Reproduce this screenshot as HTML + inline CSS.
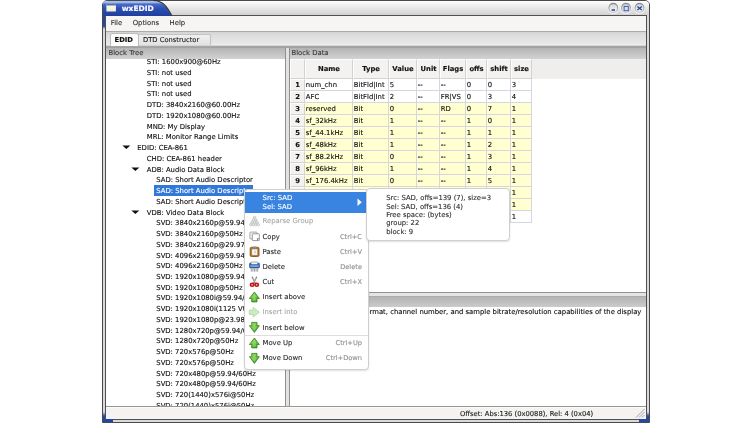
<!DOCTYPE html>
<html><head><meta charset="utf-8"><title>wxEDID</title>
<style>
html,body{margin:0;padding:0;background:#fff;}
body{width:752px;height:423px;position:relative;overflow:hidden;font-family:"DejaVu Sans","Liberation Sans",sans-serif;font-size:6.85px;color:#1a1a1a;-webkit-text-stroke:0.13px;}
.a{position:absolute;}
.t{position:absolute;white-space:pre;line-height:10px;height:10px;}
.b{font-weight:bold;}
#tree .t{color:#111;}
.mi{position:absolute;left:262.5px;white-space:pre;line-height:10px;height:10px;color:#2e2e2e;}
.sc{position:absolute;right:0;width:60px;text-align:right;white-space:pre;line-height:10px;height:10px;color:#929292;font-size:6.65px;}
.dis{color:#aaa;}
.cell{position:absolute;white-space:pre;line-height:12px;height:12px;color:#111;}
</style></head><body><div id="root" style="position:absolute;left:0;top:0;width:752px;height:423px;will-change:transform;">

<div class="a" id="frame" style="left:102px;top:0;width:546px;height:421px;border:1px solid #4a4a4a;border-radius:5px 5px 0 0;background:#d9d9d9;"></div>
<div class="a" style="left:103px;top:1px;width:546px;height:14px;border-radius:4px 4px 0 0;background:linear-gradient(#ffffff,#f0f0f0 30%,#d2d2d2);"></div>
<div class="a" style="left:105px;top:15px;width:540px;height:403px;border:1px solid #505050;background:#f5f4f2;"></div>
<svg class="a" style="left:102px;top:0" width="80" height="16" viewBox="0 0 80 16">
<defs><linearGradient id="bl" x1="0" y1="0" x2="0" y2="1"><stop offset="0" stop-color="#a9c0f2"/><stop offset="0.1" stop-color="#9db6ee"/><stop offset="0.2" stop-color="#4a6cca"/><stop offset="0.5" stop-color="#2c4fb4"/><stop offset="1" stop-color="#1f3f9e"/></linearGradient></defs>
<path d="M1,16 L1,5 Q1,1 5,1 L52.7,1 C60.7,1 65.2,8 69.2,15.5 L69.2,16 Z" fill="url(#bl)"/>
<path d="M51.7,0.5 C61.2,0.5 65.7,8 69.7,15.5" fill="none" stroke="#2a2a2a" stroke-width="1.1"/>
<defs><linearGradient id="ic" x1="0" y1="0" x2="0" y2="1"><stop offset="0" stop-color="#fcfcf4"/><stop offset="1" stop-color="#efefd6"/></linearGradient></defs><rect x="4.4" y="3.8" width="9.5" height="7.7" fill="url(#ic)"/>
<rect x="4.4" y="3.8" width="9.5" height="1.7" fill="#56729f"/>
</svg>
<div class="t b" style="left:121.7px;top:3.5px;font-size:7.5px;color:#fff;">wxEDID</div>
<div class="a" style="left:103px;top:15px;width:2px;height:14px;background:linear-gradient(#2345a6,#2345a6 80%,#d9d9d9);"></div>
<svg class="a" style="left:607px;top:2px;overflow:visible" width="13" height="12" viewBox="0 0 13 12"><g transform="translate(0.30,0)"><defs><linearGradient id="gmin" x1="0" y1="0" x2="0" y2="1"><stop offset="0" stop-color="#d6d6d6"/><stop offset="1" stop-color="#f8f8f8"/></linearGradient><linearGradient id="rmin" x1="0" y1="0" x2="0" y2="1"><stop offset="0" stop-color="#8e8e8e"/><stop offset="1" stop-color="#c8c8c8"/></linearGradient></defs><circle cx="6" cy="6.2" r="5.6" fill="#ffffff" opacity="0.8"/><circle cx="6" cy="5.9" r="4.4" fill="url(#gmin)" stroke="url(#rmin)" stroke-width="1.3"/>
<rect x="4.3" y="7.2" width="3.4" height="1.6" fill="#2b4cae"/>
</g></svg>
<svg class="a" style="left:620px;top:2px;overflow:visible" width="13" height="12" viewBox="0 0 13 12"><g transform="translate(0.00,0)"><defs><linearGradient id="gmax" x1="0" y1="0" x2="0" y2="1"><stop offset="0" stop-color="#d6d6d6"/><stop offset="1" stop-color="#f8f8f8"/></linearGradient><linearGradient id="rmax" x1="0" y1="0" x2="0" y2="1"><stop offset="0" stop-color="#8e8e8e"/><stop offset="1" stop-color="#c8c8c8"/></linearGradient></defs><circle cx="6" cy="6.2" r="5.6" fill="#ffffff" opacity="0.8"/><circle cx="6" cy="5.9" r="4.4" fill="url(#gmax)" stroke="url(#rmax)" stroke-width="1.3"/>
<rect x="4.1" y="4.4" width="4.2" height="4.3" fill="#dcdfe8" stroke="#3656b4" stroke-width="0.95"/>
</g></svg>
<svg class="a" style="left:633px;top:2px;overflow:visible" width="13" height="12" viewBox="0 0 13 12"><g transform="translate(0.50,0)"><defs><linearGradient id="gclose" x1="0" y1="0" x2="0" y2="1"><stop offset="0" stop-color="#d6d6d6"/><stop offset="1" stop-color="#f8f8f8"/></linearGradient><linearGradient id="rclose" x1="0" y1="0" x2="0" y2="1"><stop offset="0" stop-color="#8e8e8e"/><stop offset="1" stop-color="#c8c8c8"/></linearGradient></defs><circle cx="6" cy="6.2" r="5.6" fill="#ffffff" opacity="0.8"/><circle cx="6" cy="5.9" r="4.4" fill="url(#gclose)" stroke="url(#rclose)" stroke-width="1.3"/>
<path d="M3.9,4.5 L8.3,8 M8.3,4.5 L3.9,8" stroke="#2446ac" stroke-width="1.35" fill="none"/>
</g></svg>
<div class="a" style="left:106px;top:16px;width:540px;height:15px;background:#f6f5f3;"></div>
<div class="t" style="left:110.7px;top:18px;color:#333;">File</div>
<div class="t" style="left:132.7px;top:18px;color:#333;">Options</div>
<div class="t" style="left:169.6px;top:18px;color:#333;">Help</div>
<div class="a" style="left:106px;top:31px;width:540px;height:13px;background:linear-gradient(#ababab,#ababab 7.7%,#d3d3d3 8%,#dedede 35%,#e8e8e8 100%);"></div>
<div class="a" style="left:106px;top:44px;width:540px;height:1px;background:#efefef;"></div>
<div class="a" style="left:106px;top:45px;width:540px;height:1px;background:#d4d4d4;"></div>
<div class="a" style="left:106px;top:46px;width:540px;height:1px;background:#a6a6a6;"></div>
<div class="a" style="left:106px;top:47px;width:540px;height:1px;background:#a2a2a2;"></div>
<div class="a" style="left:138px;top:34px;width:72.6px;height:11px;border:1px solid #c2c2c2;border-bottom:none;border-radius:2px 2px 0 0;box-sizing:border-box;background:linear-gradient(#efefef,#e2e2e2);"></div>
<div class="a" style="left:110.4px;top:33px;width:29px;height:12.6px;border:1px solid #bdbdbd;border-bottom:none;border-radius:2.5px 2.5px 0 0;box-sizing:border-box;background:#fcfcfb;"></div>
<div class="t b" style="left:114.5px;top:34.5px;color:#111;font-size:6.8px">EDID</div>
<div class="t" style="left:143px;top:34.5px;color:#222;font-size:6.75px;">DTD Constructor</div>
<div class="a" style="left:106px;top:48px;width:179px;height:11px;background:linear-gradient(#b4b4b4,#c3c3c3 50%,#d2d2d2);"></div>
<div class="a" style="left:290px;top:48px;width:356px;height:11px;background:linear-gradient(#b4b4b4,#c3c3c3 50%,#d2d2d2);"></div>
<div class="t" style="left:108.5px;top:48px;color:#3a3a3a;">Block Tree</div>
<div class="t" style="left:291.5px;top:48px;color:#3a3a3a;">Block Data</div>
<div class="a" style="left:285px;top:48px;width:5px;height:359px;background:#e3e2e0;border-left:1px solid #8f8f8f;border-right:1px solid #8f8f8f;box-sizing:border-box;"></div>
<div class="a" id="tree" style="left:106px;top:59px;width:179px;height:347px;background:#fff;overflow:hidden;">
<div class="t" style="left:40.8px;top:-1.90px;">STI: 1600x900@60Hz</div>
<div class="t" style="left:40.8px;top:8.84px;">STI: not used</div>
<div class="t" style="left:40.8px;top:19.59px;">STI: not used</div>
<div class="t" style="left:40.8px;top:30.34px;">STI: not used</div>
<div class="t" style="left:40.8px;top:41.08px;">DTD: 3840x2160@60.00Hz</div>
<div class="t" style="left:40.8px;top:51.82px;">DTD: 1920x1080@60.00Hz</div>
<div class="t" style="left:40.8px;top:62.57px;">MND: My Display</div>
<div class="t" style="left:40.8px;top:73.31px;">MRL: Monitor Range Limits</div>
<div class="t" style="left:31.3px;top:84.06px;">EDID: CEA-861</div>
<svg class="a" style="left:15.5px;top:86.36px" width="9" height="5" viewBox="0 0 9 5"><path d="M0.4,0.5 L8.3,0.5 L4.35,4.1 Z" fill="#111"/></svg>
<div class="t" style="left:40.8px;top:94.81px;">CHD: CEA-861 header</div>
<div class="t" style="left:40.8px;top:105.55px;">ADB: Audio Data Block</div>
<svg class="a" style="left:25.0px;top:107.85px" width="9" height="5" viewBox="0 0 9 5"><path d="M0.4,0.5 L8.3,0.5 L4.35,4.1 Z" fill="#111"/></svg>
<div class="t" style="left:50.3px;top:116.29px;">SAD: Short Audio Descriptor</div>
<div class="a" style="left:48.3px;top:126.24px;width:99px;height:10.6px;background:#3178d9;"></div>
<div class="t" style="left:50.3px;top:127.04px;color:#fff;">SAD: Short Audio Descriptor</div>
<div class="t" style="left:50.3px;top:137.78px;">SAD: Short Audio Descriptor</div>
<div class="t" style="left:40.8px;top:148.53px;">VDB: Video Data Block</div>
<svg class="a" style="left:25.0px;top:150.83px" width="9" height="5" viewBox="0 0 9 5"><path d="M0.4,0.5 L8.3,0.5 L4.35,4.1 Z" fill="#111"/></svg>
<div class="t" style="left:50.3px;top:159.27px;">SVD: 3840x2160p@59.94/60Hz</div>
<div class="t" style="left:50.3px;top:170.02px;">SVD: 3840x2160p@50Hz</div>
<div class="t" style="left:50.3px;top:180.76px;">SVD: 3840x2160p@29.97/30Hz</div>
<div class="t" style="left:50.3px;top:191.51px;">SVD: 4096x2160p@59.94/60Hz</div>
<div class="t" style="left:50.3px;top:202.25px;">SVD: 4096x2160p@50Hz</div>
<div class="t" style="left:50.3px;top:213.00px;">SVD: 1920x1080p@59.94/60Hz</div>
<div class="t" style="left:50.3px;top:223.75px;">SVD: 1920x1080p@50Hz</div>
<div class="t" style="left:50.3px;top:234.49px;">SVD: 1920x1080i@59.94/60Hz</div>
<div class="t" style="left:50.3px;top:245.24px;">SVD: 1920x1080i(1125 Vt)@50Hz</div>
<div class="t" style="left:50.3px;top:255.98px;">SVD: 1920x1080p@23.98/24Hz</div>
<div class="t" style="left:50.3px;top:266.73px;">SVD: 1280x720p@59.94/60Hz</div>
<div class="t" style="left:50.3px;top:277.47px;">SVD: 1280x720p@50Hz</div>
<div class="t" style="left:50.3px;top:288.21px;">SVD: 720x576p@50Hz</div>
<div class="t" style="left:50.3px;top:298.96px;">SVD: 720x576p@50Hz</div>
<div class="t" style="left:50.3px;top:309.70px;">SVD: 720x480p@59.94/60Hz</div>
<div class="t" style="left:50.3px;top:320.45px;">SVD: 720x480p@59.94/60Hz</div>
<div class="t" style="left:50.3px;top:331.19px;">SVD: 720(1440)x576i@50Hz</div>
<div class="t" style="left:50.3px;top:341.94px;">SVD: 720(1440)x576i@50Hz</div>
</div><div class="a" style="left:290px;top:59px;width:356px;height:233px;background:#fff;"></div>
<div class="a" style="left:290px;top:59px;width:356px;height:20px;background:#efeeec;"></div>
<div class="a" style="left:290px;top:59px;width:15.0px;height:20px;box-sizing:border-box;background:#f3f2f0;border-right:1px solid #d2d2d2;border-bottom:1px solid #d2d2d2;border-left:1px solid #fdfdfd;border-top:1px solid #fdfdfd;"></div>
<div class="a" style="left:305px;top:59px;width:48.0px;height:20px;box-sizing:border-box;background:#f3f2f0;border-right:1px solid #d2d2d2;border-bottom:1px solid #d2d2d2;border-left:1px solid #fdfdfd;border-top:1px solid #fdfdfd;"></div>
<div class="cell b" style="left:305px;top:63px;width:48.0px;text-align:center;font-size:6.8px;">Name</div>
<div class="a" style="left:353px;top:59px;width:36.0px;height:20px;box-sizing:border-box;background:#f3f2f0;border-right:1px solid #d2d2d2;border-bottom:1px solid #d2d2d2;border-left:1px solid #fdfdfd;border-top:1px solid #fdfdfd;"></div>
<div class="cell b" style="left:353px;top:63px;width:36.0px;text-align:center;font-size:6.8px;">Type</div>
<div class="a" style="left:389px;top:59px;width:28.0px;height:20px;box-sizing:border-box;background:#f3f2f0;border-right:1px solid #d2d2d2;border-bottom:1px solid #d2d2d2;border-left:1px solid #fdfdfd;border-top:1px solid #fdfdfd;"></div>
<div class="cell b" style="left:389px;top:63px;width:28.0px;text-align:center;font-size:6.8px;">Value</div>
<div class="a" style="left:417px;top:59px;width:23.0px;height:20px;box-sizing:border-box;background:#f3f2f0;border-right:1px solid #d2d2d2;border-bottom:1px solid #d2d2d2;border-left:1px solid #fdfdfd;border-top:1px solid #fdfdfd;"></div>
<div class="cell b" style="left:417px;top:63px;width:23.0px;text-align:center;font-size:6.8px;">Unit</div>
<div class="a" style="left:440px;top:59px;width:26.0px;height:20px;box-sizing:border-box;background:#f3f2f0;border-right:1px solid #d2d2d2;border-bottom:1px solid #d2d2d2;border-left:1px solid #fdfdfd;border-top:1px solid #fdfdfd;"></div>
<div class="cell b" style="left:440px;top:63px;width:26.0px;text-align:center;font-size:6.8px;">Flags</div>
<div class="a" style="left:466px;top:59px;width:21.0px;height:20px;box-sizing:border-box;background:#f3f2f0;border-right:1px solid #d2d2d2;border-bottom:1px solid #d2d2d2;border-left:1px solid #fdfdfd;border-top:1px solid #fdfdfd;"></div>
<div class="cell b" style="left:466px;top:63px;width:21.0px;text-align:center;font-size:6.8px;">offs</div>
<div class="a" style="left:487px;top:59px;width:24.0px;height:20px;box-sizing:border-box;background:#f3f2f0;border-right:1px solid #d2d2d2;border-bottom:1px solid #d2d2d2;border-left:1px solid #fdfdfd;border-top:1px solid #fdfdfd;"></div>
<div class="cell b" style="left:487px;top:63px;width:24.0px;text-align:center;font-size:6.8px;">shift</div>
<div class="a" style="left:511px;top:59px;width:21.0px;height:20px;box-sizing:border-box;background:#f3f2f0;border-right:1px solid #d2d2d2;border-bottom:1px solid #d2d2d2;border-left:1px solid #fdfdfd;border-top:1px solid #fdfdfd;"></div>
<div class="cell b" style="left:511px;top:63px;width:21.0px;text-align:center;font-size:6.8px;">size</div>
<div class="a" style="left:290px;top:79px;width:15.0px;height:12px;box-sizing:border-box;background:#f3f2f0;border-right:1px solid #d2d2d2;border-bottom:1px solid #d2d2d2;border-left:1px solid #fdfdfd;border-top:1px solid #fdfdfd;"></div>
<div class="cell b" style="left:290px;top:79px;width:15.0px;text-align:center;font-size:6.8px;">1</div>
<div class="a" style="left:305px;top:79px;width:48.0px;height:12px;box-sizing:border-box;background:#ffffff;border-right:1px solid #d6d6e0;border-bottom:1px solid #d6d6e0;"></div>
<div class="cell" style="left:305.8px;top:79px;">num_chn</div>
<div class="a" style="left:353px;top:79px;width:36.0px;height:12px;box-sizing:border-box;background:#ffffff;border-right:1px solid #d6d6e0;border-bottom:1px solid #d6d6e0;"></div>
<div class="cell" style="left:353.8px;top:79px;">BitFld|Int</div>
<div class="a" style="left:389px;top:79px;width:28.0px;height:12px;box-sizing:border-box;background:#ffffff;border-right:1px solid #d6d6e0;border-bottom:1px solid #d6d6e0;"></div>
<div class="cell" style="left:389.8px;top:79px;">5</div>
<div class="a" style="left:417px;top:79px;width:23.0px;height:12px;box-sizing:border-box;background:#ffffff;border-right:1px solid #d6d6e0;border-bottom:1px solid #d6d6e0;"></div>
<div class="cell" style="left:417.8px;top:79px;">--</div>
<div class="a" style="left:440px;top:79px;width:26.0px;height:12px;box-sizing:border-box;background:#ffffff;border-right:1px solid #d6d6e0;border-bottom:1px solid #d6d6e0;"></div>
<div class="cell" style="left:440.8px;top:79px;">--</div>
<div class="a" style="left:466px;top:79px;width:21.0px;height:12px;box-sizing:border-box;background:#ffffff;border-right:1px solid #d6d6e0;border-bottom:1px solid #d6d6e0;"></div>
<div class="cell" style="left:466.8px;top:79px;">0</div>
<div class="a" style="left:487px;top:79px;width:24.0px;height:12px;box-sizing:border-box;background:#ffffff;border-right:1px solid #d6d6e0;border-bottom:1px solid #d6d6e0;"></div>
<div class="cell" style="left:487.8px;top:79px;">0</div>
<div class="a" style="left:511px;top:79px;width:21.0px;height:12px;box-sizing:border-box;background:#ffffff;border-right:1px solid #d6d6e0;border-bottom:1px solid #d6d6e0;"></div>
<div class="cell" style="left:511.8px;top:79px;">3</div>
<div class="a" style="left:290px;top:91px;width:15.0px;height:12px;box-sizing:border-box;background:#f3f2f0;border-right:1px solid #d2d2d2;border-bottom:1px solid #d2d2d2;border-left:1px solid #fdfdfd;border-top:1px solid #fdfdfd;"></div>
<div class="cell b" style="left:290px;top:91px;width:15.0px;text-align:center;font-size:6.8px;">2</div>
<div class="a" style="left:305px;top:91px;width:48.0px;height:12px;box-sizing:border-box;background:#ffffff;border-right:1px solid #d6d6e0;border-bottom:1px solid #d6d6e0;"></div>
<div class="cell" style="left:305.8px;top:91px;">AFC</div>
<div class="a" style="left:353px;top:91px;width:36.0px;height:12px;box-sizing:border-box;background:#ffffff;border-right:1px solid #d6d6e0;border-bottom:1px solid #d6d6e0;"></div>
<div class="cell" style="left:353.8px;top:91px;">BitFld|Int</div>
<div class="a" style="left:389px;top:91px;width:28.0px;height:12px;box-sizing:border-box;background:#ffffff;border-right:1px solid #d6d6e0;border-bottom:1px solid #d6d6e0;"></div>
<div class="cell" style="left:389.8px;top:91px;">2</div>
<div class="a" style="left:417px;top:91px;width:23.0px;height:12px;box-sizing:border-box;background:#ffffff;border-right:1px solid #d6d6e0;border-bottom:1px solid #d6d6e0;"></div>
<div class="cell" style="left:417.8px;top:91px;">--</div>
<div class="a" style="left:440px;top:91px;width:26.0px;height:12px;box-sizing:border-box;background:#ffffff;border-right:1px solid #d6d6e0;border-bottom:1px solid #d6d6e0;"></div>
<div class="cell" style="left:440.8px;top:91px;">FR|VS</div>
<div class="a" style="left:466px;top:91px;width:21.0px;height:12px;box-sizing:border-box;background:#ffffff;border-right:1px solid #d6d6e0;border-bottom:1px solid #d6d6e0;"></div>
<div class="cell" style="left:466.8px;top:91px;">0</div>
<div class="a" style="left:487px;top:91px;width:24.0px;height:12px;box-sizing:border-box;background:#ffffff;border-right:1px solid #d6d6e0;border-bottom:1px solid #d6d6e0;"></div>
<div class="cell" style="left:487.8px;top:91px;">3</div>
<div class="a" style="left:511px;top:91px;width:21.0px;height:12px;box-sizing:border-box;background:#ffffff;border-right:1px solid #d6d6e0;border-bottom:1px solid #d6d6e0;"></div>
<div class="cell" style="left:511.8px;top:91px;">4</div>
<div class="a" style="left:290px;top:103px;width:15.0px;height:12px;box-sizing:border-box;background:#f3f2f0;border-right:1px solid #d2d2d2;border-bottom:1px solid #d2d2d2;border-left:1px solid #fdfdfd;border-top:1px solid #fdfdfd;"></div>
<div class="cell b" style="left:290px;top:103px;width:15.0px;text-align:center;font-size:6.8px;">3</div>
<div class="a" style="left:305px;top:103px;width:48.0px;height:12px;box-sizing:border-box;background:#ffffd0;border-right:1px solid #d6d6e0;border-bottom:1px solid #d6d6e0;"></div>
<div class="cell" style="left:305.8px;top:103px;">reserved</div>
<div class="a" style="left:353px;top:103px;width:36.0px;height:12px;box-sizing:border-box;background:#ffffd0;border-right:1px solid #d6d6e0;border-bottom:1px solid #d6d6e0;"></div>
<div class="cell" style="left:353.8px;top:103px;">Bit</div>
<div class="a" style="left:389px;top:103px;width:28.0px;height:12px;box-sizing:border-box;background:#ffffd0;border-right:1px solid #d6d6e0;border-bottom:1px solid #d6d6e0;"></div>
<div class="cell" style="left:389.8px;top:103px;">0</div>
<div class="a" style="left:417px;top:103px;width:23.0px;height:12px;box-sizing:border-box;background:#ffffd0;border-right:1px solid #d6d6e0;border-bottom:1px solid #d6d6e0;"></div>
<div class="cell" style="left:417.8px;top:103px;">--</div>
<div class="a" style="left:440px;top:103px;width:26.0px;height:12px;box-sizing:border-box;background:#ffffd0;border-right:1px solid #d6d6e0;border-bottom:1px solid #d6d6e0;"></div>
<div class="cell" style="left:440.8px;top:103px;">RD</div>
<div class="a" style="left:466px;top:103px;width:21.0px;height:12px;box-sizing:border-box;background:#ffffd0;border-right:1px solid #d6d6e0;border-bottom:1px solid #d6d6e0;"></div>
<div class="cell" style="left:466.8px;top:103px;">0</div>
<div class="a" style="left:487px;top:103px;width:24.0px;height:12px;box-sizing:border-box;background:#ffffd0;border-right:1px solid #d6d6e0;border-bottom:1px solid #d6d6e0;"></div>
<div class="cell" style="left:487.8px;top:103px;">7</div>
<div class="a" style="left:511px;top:103px;width:21.0px;height:12px;box-sizing:border-box;background:#ffffd0;border-right:1px solid #d6d6e0;border-bottom:1px solid #d6d6e0;"></div>
<div class="cell" style="left:511.8px;top:103px;">1</div>
<div class="a" style="left:290px;top:115px;width:15.0px;height:12px;box-sizing:border-box;background:#f3f2f0;border-right:1px solid #d2d2d2;border-bottom:1px solid #d2d2d2;border-left:1px solid #fdfdfd;border-top:1px solid #fdfdfd;"></div>
<div class="cell b" style="left:290px;top:115px;width:15.0px;text-align:center;font-size:6.8px;">4</div>
<div class="a" style="left:305px;top:115px;width:48.0px;height:12px;box-sizing:border-box;background:#ffffd0;border-right:1px solid #d6d6e0;border-bottom:1px solid #d6d6e0;"></div>
<div class="cell" style="left:305.8px;top:115px;">sf_32kHz</div>
<div class="a" style="left:353px;top:115px;width:36.0px;height:12px;box-sizing:border-box;background:#ffffd0;border-right:1px solid #d6d6e0;border-bottom:1px solid #d6d6e0;"></div>
<div class="cell" style="left:353.8px;top:115px;">Bit</div>
<div class="a" style="left:389px;top:115px;width:28.0px;height:12px;box-sizing:border-box;background:#ffffd0;border-right:1px solid #d6d6e0;border-bottom:1px solid #d6d6e0;"></div>
<div class="cell" style="left:389.8px;top:115px;">1</div>
<div class="a" style="left:417px;top:115px;width:23.0px;height:12px;box-sizing:border-box;background:#ffffd0;border-right:1px solid #d6d6e0;border-bottom:1px solid #d6d6e0;"></div>
<div class="cell" style="left:417.8px;top:115px;">--</div>
<div class="a" style="left:440px;top:115px;width:26.0px;height:12px;box-sizing:border-box;background:#ffffd0;border-right:1px solid #d6d6e0;border-bottom:1px solid #d6d6e0;"></div>
<div class="cell" style="left:440.8px;top:115px;">--</div>
<div class="a" style="left:466px;top:115px;width:21.0px;height:12px;box-sizing:border-box;background:#ffffd0;border-right:1px solid #d6d6e0;border-bottom:1px solid #d6d6e0;"></div>
<div class="cell" style="left:466.8px;top:115px;">1</div>
<div class="a" style="left:487px;top:115px;width:24.0px;height:12px;box-sizing:border-box;background:#ffffd0;border-right:1px solid #d6d6e0;border-bottom:1px solid #d6d6e0;"></div>
<div class="cell" style="left:487.8px;top:115px;">0</div>
<div class="a" style="left:511px;top:115px;width:21.0px;height:12px;box-sizing:border-box;background:#ffffd0;border-right:1px solid #d6d6e0;border-bottom:1px solid #d6d6e0;"></div>
<div class="cell" style="left:511.8px;top:115px;">1</div>
<div class="a" style="left:290px;top:127px;width:15.0px;height:12px;box-sizing:border-box;background:#f3f2f0;border-right:1px solid #d2d2d2;border-bottom:1px solid #d2d2d2;border-left:1px solid #fdfdfd;border-top:1px solid #fdfdfd;"></div>
<div class="cell b" style="left:290px;top:127px;width:15.0px;text-align:center;font-size:6.8px;">5</div>
<div class="a" style="left:305px;top:127px;width:48.0px;height:12px;box-sizing:border-box;background:#ffffd0;border-right:1px solid #d6d6e0;border-bottom:1px solid #d6d6e0;"></div>
<div class="cell" style="left:305.8px;top:127px;">sf_44.1kHz</div>
<div class="a" style="left:353px;top:127px;width:36.0px;height:12px;box-sizing:border-box;background:#ffffd0;border-right:1px solid #d6d6e0;border-bottom:1px solid #d6d6e0;"></div>
<div class="cell" style="left:353.8px;top:127px;">Bit</div>
<div class="a" style="left:389px;top:127px;width:28.0px;height:12px;box-sizing:border-box;background:#ffffd0;border-right:1px solid #d6d6e0;border-bottom:1px solid #d6d6e0;"></div>
<div class="cell" style="left:389.8px;top:127px;">1</div>
<div class="a" style="left:417px;top:127px;width:23.0px;height:12px;box-sizing:border-box;background:#ffffd0;border-right:1px solid #d6d6e0;border-bottom:1px solid #d6d6e0;"></div>
<div class="cell" style="left:417.8px;top:127px;">--</div>
<div class="a" style="left:440px;top:127px;width:26.0px;height:12px;box-sizing:border-box;background:#ffffd0;border-right:1px solid #d6d6e0;border-bottom:1px solid #d6d6e0;"></div>
<div class="cell" style="left:440.8px;top:127px;">--</div>
<div class="a" style="left:466px;top:127px;width:21.0px;height:12px;box-sizing:border-box;background:#ffffd0;border-right:1px solid #d6d6e0;border-bottom:1px solid #d6d6e0;"></div>
<div class="cell" style="left:466.8px;top:127px;">1</div>
<div class="a" style="left:487px;top:127px;width:24.0px;height:12px;box-sizing:border-box;background:#ffffd0;border-right:1px solid #d6d6e0;border-bottom:1px solid #d6d6e0;"></div>
<div class="cell" style="left:487.8px;top:127px;">1</div>
<div class="a" style="left:511px;top:127px;width:21.0px;height:12px;box-sizing:border-box;background:#ffffd0;border-right:1px solid #d6d6e0;border-bottom:1px solid #d6d6e0;"></div>
<div class="cell" style="left:511.8px;top:127px;">1</div>
<div class="a" style="left:290px;top:139px;width:15.0px;height:12px;box-sizing:border-box;background:#f3f2f0;border-right:1px solid #d2d2d2;border-bottom:1px solid #d2d2d2;border-left:1px solid #fdfdfd;border-top:1px solid #fdfdfd;"></div>
<div class="cell b" style="left:290px;top:139px;width:15.0px;text-align:center;font-size:6.8px;">6</div>
<div class="a" style="left:305px;top:139px;width:48.0px;height:12px;box-sizing:border-box;background:#ffffd0;border-right:1px solid #d6d6e0;border-bottom:1px solid #d6d6e0;"></div>
<div class="cell" style="left:305.8px;top:139px;">sf_48kHz</div>
<div class="a" style="left:353px;top:139px;width:36.0px;height:12px;box-sizing:border-box;background:#ffffd0;border-right:1px solid #d6d6e0;border-bottom:1px solid #d6d6e0;"></div>
<div class="cell" style="left:353.8px;top:139px;">Bit</div>
<div class="a" style="left:389px;top:139px;width:28.0px;height:12px;box-sizing:border-box;background:#ffffd0;border-right:1px solid #d6d6e0;border-bottom:1px solid #d6d6e0;"></div>
<div class="cell" style="left:389.8px;top:139px;">1</div>
<div class="a" style="left:417px;top:139px;width:23.0px;height:12px;box-sizing:border-box;background:#ffffd0;border-right:1px solid #d6d6e0;border-bottom:1px solid #d6d6e0;"></div>
<div class="cell" style="left:417.8px;top:139px;">--</div>
<div class="a" style="left:440px;top:139px;width:26.0px;height:12px;box-sizing:border-box;background:#ffffd0;border-right:1px solid #d6d6e0;border-bottom:1px solid #d6d6e0;"></div>
<div class="cell" style="left:440.8px;top:139px;">--</div>
<div class="a" style="left:466px;top:139px;width:21.0px;height:12px;box-sizing:border-box;background:#ffffd0;border-right:1px solid #d6d6e0;border-bottom:1px solid #d6d6e0;"></div>
<div class="cell" style="left:466.8px;top:139px;">1</div>
<div class="a" style="left:487px;top:139px;width:24.0px;height:12px;box-sizing:border-box;background:#ffffd0;border-right:1px solid #d6d6e0;border-bottom:1px solid #d6d6e0;"></div>
<div class="cell" style="left:487.8px;top:139px;">2</div>
<div class="a" style="left:511px;top:139px;width:21.0px;height:12px;box-sizing:border-box;background:#ffffd0;border-right:1px solid #d6d6e0;border-bottom:1px solid #d6d6e0;"></div>
<div class="cell" style="left:511.8px;top:139px;">1</div>
<div class="a" style="left:290px;top:151px;width:15.0px;height:12px;box-sizing:border-box;background:#f3f2f0;border-right:1px solid #d2d2d2;border-bottom:1px solid #d2d2d2;border-left:1px solid #fdfdfd;border-top:1px solid #fdfdfd;"></div>
<div class="cell b" style="left:290px;top:151px;width:15.0px;text-align:center;font-size:6.8px;">7</div>
<div class="a" style="left:305px;top:151px;width:48.0px;height:12px;box-sizing:border-box;background:#ffffd0;border-right:1px solid #d6d6e0;border-bottom:1px solid #d6d6e0;"></div>
<div class="cell" style="left:305.8px;top:151px;">sf_88.2kHz</div>
<div class="a" style="left:353px;top:151px;width:36.0px;height:12px;box-sizing:border-box;background:#ffffd0;border-right:1px solid #d6d6e0;border-bottom:1px solid #d6d6e0;"></div>
<div class="cell" style="left:353.8px;top:151px;">Bit</div>
<div class="a" style="left:389px;top:151px;width:28.0px;height:12px;box-sizing:border-box;background:#ffffd0;border-right:1px solid #d6d6e0;border-bottom:1px solid #d6d6e0;"></div>
<div class="cell" style="left:389.8px;top:151px;">0</div>
<div class="a" style="left:417px;top:151px;width:23.0px;height:12px;box-sizing:border-box;background:#ffffd0;border-right:1px solid #d6d6e0;border-bottom:1px solid #d6d6e0;"></div>
<div class="cell" style="left:417.8px;top:151px;">--</div>
<div class="a" style="left:440px;top:151px;width:26.0px;height:12px;box-sizing:border-box;background:#ffffd0;border-right:1px solid #d6d6e0;border-bottom:1px solid #d6d6e0;"></div>
<div class="cell" style="left:440.8px;top:151px;">--</div>
<div class="a" style="left:466px;top:151px;width:21.0px;height:12px;box-sizing:border-box;background:#ffffd0;border-right:1px solid #d6d6e0;border-bottom:1px solid #d6d6e0;"></div>
<div class="cell" style="left:466.8px;top:151px;">1</div>
<div class="a" style="left:487px;top:151px;width:24.0px;height:12px;box-sizing:border-box;background:#ffffd0;border-right:1px solid #d6d6e0;border-bottom:1px solid #d6d6e0;"></div>
<div class="cell" style="left:487.8px;top:151px;">3</div>
<div class="a" style="left:511px;top:151px;width:21.0px;height:12px;box-sizing:border-box;background:#ffffd0;border-right:1px solid #d6d6e0;border-bottom:1px solid #d6d6e0;"></div>
<div class="cell" style="left:511.8px;top:151px;">1</div>
<div class="a" style="left:290px;top:163px;width:15.0px;height:12px;box-sizing:border-box;background:#f3f2f0;border-right:1px solid #d2d2d2;border-bottom:1px solid #d2d2d2;border-left:1px solid #fdfdfd;border-top:1px solid #fdfdfd;"></div>
<div class="cell b" style="left:290px;top:163px;width:15.0px;text-align:center;font-size:6.8px;">8</div>
<div class="a" style="left:305px;top:163px;width:48.0px;height:12px;box-sizing:border-box;background:#ffffd0;border-right:1px solid #d6d6e0;border-bottom:1px solid #d6d6e0;"></div>
<div class="cell" style="left:305.8px;top:163px;">sf_96kHz</div>
<div class="a" style="left:353px;top:163px;width:36.0px;height:12px;box-sizing:border-box;background:#ffffd0;border-right:1px solid #d6d6e0;border-bottom:1px solid #d6d6e0;"></div>
<div class="cell" style="left:353.8px;top:163px;">Bit</div>
<div class="a" style="left:389px;top:163px;width:28.0px;height:12px;box-sizing:border-box;background:#ffffd0;border-right:1px solid #d6d6e0;border-bottom:1px solid #d6d6e0;"></div>
<div class="cell" style="left:389.8px;top:163px;">1</div>
<div class="a" style="left:417px;top:163px;width:23.0px;height:12px;box-sizing:border-box;background:#ffffd0;border-right:1px solid #d6d6e0;border-bottom:1px solid #d6d6e0;"></div>
<div class="cell" style="left:417.8px;top:163px;">--</div>
<div class="a" style="left:440px;top:163px;width:26.0px;height:12px;box-sizing:border-box;background:#ffffd0;border-right:1px solid #d6d6e0;border-bottom:1px solid #d6d6e0;"></div>
<div class="cell" style="left:440.8px;top:163px;">--</div>
<div class="a" style="left:466px;top:163px;width:21.0px;height:12px;box-sizing:border-box;background:#ffffd0;border-right:1px solid #d6d6e0;border-bottom:1px solid #d6d6e0;"></div>
<div class="cell" style="left:466.8px;top:163px;">1</div>
<div class="a" style="left:487px;top:163px;width:24.0px;height:12px;box-sizing:border-box;background:#ffffd0;border-right:1px solid #d6d6e0;border-bottom:1px solid #d6d6e0;"></div>
<div class="cell" style="left:487.8px;top:163px;">4</div>
<div class="a" style="left:511px;top:163px;width:21.0px;height:12px;box-sizing:border-box;background:#ffffd0;border-right:1px solid #d6d6e0;border-bottom:1px solid #d6d6e0;"></div>
<div class="cell" style="left:511.8px;top:163px;">1</div>
<div class="a" style="left:290px;top:175px;width:15.0px;height:12px;box-sizing:border-box;background:#f3f2f0;border-right:1px solid #d2d2d2;border-bottom:1px solid #d2d2d2;border-left:1px solid #fdfdfd;border-top:1px solid #fdfdfd;"></div>
<div class="cell b" style="left:290px;top:175px;width:15.0px;text-align:center;font-size:6.8px;">9</div>
<div class="a" style="left:305px;top:175px;width:48.0px;height:12px;box-sizing:border-box;background:#ffffd0;border-right:1px solid #d6d6e0;border-bottom:1px solid #d6d6e0;"></div>
<div class="cell" style="left:305.8px;top:175px;">sf_176.4kHz</div>
<div class="a" style="left:353px;top:175px;width:36.0px;height:12px;box-sizing:border-box;background:#ffffd0;border-right:1px solid #d6d6e0;border-bottom:1px solid #d6d6e0;"></div>
<div class="cell" style="left:353.8px;top:175px;">Bit</div>
<div class="a" style="left:389px;top:175px;width:28.0px;height:12px;box-sizing:border-box;background:#ffffd0;border-right:1px solid #d6d6e0;border-bottom:1px solid #d6d6e0;"></div>
<div class="cell" style="left:389.8px;top:175px;">0</div>
<div class="a" style="left:417px;top:175px;width:23.0px;height:12px;box-sizing:border-box;background:#ffffd0;border-right:1px solid #d6d6e0;border-bottom:1px solid #d6d6e0;"></div>
<div class="cell" style="left:417.8px;top:175px;">--</div>
<div class="a" style="left:440px;top:175px;width:26.0px;height:12px;box-sizing:border-box;background:#ffffd0;border-right:1px solid #d6d6e0;border-bottom:1px solid #d6d6e0;"></div>
<div class="cell" style="left:440.8px;top:175px;">--</div>
<div class="a" style="left:466px;top:175px;width:21.0px;height:12px;box-sizing:border-box;background:#ffffd0;border-right:1px solid #d6d6e0;border-bottom:1px solid #d6d6e0;"></div>
<div class="cell" style="left:466.8px;top:175px;">1</div>
<div class="a" style="left:487px;top:175px;width:24.0px;height:12px;box-sizing:border-box;background:#ffffd0;border-right:1px solid #d6d6e0;border-bottom:1px solid #d6d6e0;"></div>
<div class="cell" style="left:487.8px;top:175px;">5</div>
<div class="a" style="left:511px;top:175px;width:21.0px;height:12px;box-sizing:border-box;background:#ffffd0;border-right:1px solid #d6d6e0;border-bottom:1px solid #d6d6e0;"></div>
<div class="cell" style="left:511.8px;top:175px;">1</div>
<div class="a" style="left:290px;top:187px;width:15.0px;height:12px;box-sizing:border-box;background:#f3f2f0;border-right:1px solid #d2d2d2;border-bottom:1px solid #d2d2d2;border-left:1px solid #fdfdfd;border-top:1px solid #fdfdfd;"></div>
<div class="cell b" style="left:290px;top:187px;width:15.0px;text-align:center;font-size:6.8px;">10</div>
<div class="a" style="left:305px;top:187px;width:48.0px;height:12px;box-sizing:border-box;background:#ffffd0;border-right:1px solid #d6d6e0;border-bottom:1px solid #d6d6e0;"></div>
<div class="cell" style="left:305.8px;top:187px;">sf_192kHz</div>
<div class="a" style="left:353px;top:187px;width:36.0px;height:12px;box-sizing:border-box;background:#ffffd0;border-right:1px solid #d6d6e0;border-bottom:1px solid #d6d6e0;"></div>
<div class="cell" style="left:353.8px;top:187px;">Bit</div>
<div class="a" style="left:389px;top:187px;width:28.0px;height:12px;box-sizing:border-box;background:#ffffd0;border-right:1px solid #d6d6e0;border-bottom:1px solid #d6d6e0;"></div>
<div class="cell" style="left:389.8px;top:187px;">0</div>
<div class="a" style="left:417px;top:187px;width:23.0px;height:12px;box-sizing:border-box;background:#ffffd0;border-right:1px solid #d6d6e0;border-bottom:1px solid #d6d6e0;"></div>
<div class="cell" style="left:417.8px;top:187px;">--</div>
<div class="a" style="left:440px;top:187px;width:26.0px;height:12px;box-sizing:border-box;background:#ffffd0;border-right:1px solid #d6d6e0;border-bottom:1px solid #d6d6e0;"></div>
<div class="cell" style="left:440.8px;top:187px;">--</div>
<div class="a" style="left:466px;top:187px;width:21.0px;height:12px;box-sizing:border-box;background:#ffffd0;border-right:1px solid #d6d6e0;border-bottom:1px solid #d6d6e0;"></div>
<div class="cell" style="left:466.8px;top:187px;">1</div>
<div class="a" style="left:487px;top:187px;width:24.0px;height:12px;box-sizing:border-box;background:#ffffd0;border-right:1px solid #d6d6e0;border-bottom:1px solid #d6d6e0;"></div>
<div class="cell" style="left:487.8px;top:187px;">6</div>
<div class="a" style="left:511px;top:187px;width:21.0px;height:12px;box-sizing:border-box;background:#ffffd0;border-right:1px solid #d6d6e0;border-bottom:1px solid #d6d6e0;"></div>
<div class="cell" style="left:511.8px;top:187px;">1</div>
<div class="a" style="left:290px;top:199px;width:15.0px;height:12px;box-sizing:border-box;background:#f3f2f0;border-right:1px solid #d2d2d2;border-bottom:1px solid #d2d2d2;border-left:1px solid #fdfdfd;border-top:1px solid #fdfdfd;"></div>
<div class="cell b" style="left:290px;top:199px;width:15.0px;text-align:center;font-size:6.8px;">11</div>
<div class="a" style="left:305px;top:199px;width:48.0px;height:12px;box-sizing:border-box;background:#ffffd0;border-right:1px solid #d6d6e0;border-bottom:1px solid #d6d6e0;"></div>
<div class="cell" style="left:305.8px;top:199px;">reserved</div>
<div class="a" style="left:353px;top:199px;width:36.0px;height:12px;box-sizing:border-box;background:#ffffd0;border-right:1px solid #d6d6e0;border-bottom:1px solid #d6d6e0;"></div>
<div class="cell" style="left:353.8px;top:199px;">Bit</div>
<div class="a" style="left:389px;top:199px;width:28.0px;height:12px;box-sizing:border-box;background:#ffffd0;border-right:1px solid #d6d6e0;border-bottom:1px solid #d6d6e0;"></div>
<div class="cell" style="left:389.8px;top:199px;">0</div>
<div class="a" style="left:417px;top:199px;width:23.0px;height:12px;box-sizing:border-box;background:#ffffd0;border-right:1px solid #d6d6e0;border-bottom:1px solid #d6d6e0;"></div>
<div class="cell" style="left:417.8px;top:199px;">--</div>
<div class="a" style="left:440px;top:199px;width:26.0px;height:12px;box-sizing:border-box;background:#ffffd0;border-right:1px solid #d6d6e0;border-bottom:1px solid #d6d6e0;"></div>
<div class="cell" style="left:440.8px;top:199px;">RD</div>
<div class="a" style="left:466px;top:199px;width:21.0px;height:12px;box-sizing:border-box;background:#ffffd0;border-right:1px solid #d6d6e0;border-bottom:1px solid #d6d6e0;"></div>
<div class="cell" style="left:466.8px;top:199px;">1</div>
<div class="a" style="left:487px;top:199px;width:24.0px;height:12px;box-sizing:border-box;background:#ffffd0;border-right:1px solid #d6d6e0;border-bottom:1px solid #d6d6e0;"></div>
<div class="cell" style="left:487.8px;top:199px;">7</div>
<div class="a" style="left:511px;top:199px;width:21.0px;height:12px;box-sizing:border-box;background:#ffffd0;border-right:1px solid #d6d6e0;border-bottom:1px solid #d6d6e0;"></div>
<div class="cell" style="left:511.8px;top:199px;">1</div>
<div class="a" style="left:290px;top:211px;width:15.0px;height:12px;box-sizing:border-box;background:#f3f2f0;border-right:1px solid #d2d2d2;border-bottom:1px solid #d2d2d2;border-left:1px solid #fdfdfd;border-top:1px solid #fdfdfd;"></div>
<div class="cell b" style="left:290px;top:211px;width:15.0px;text-align:center;font-size:6.8px;">12</div>
<div class="a" style="left:305px;top:211px;width:48.0px;height:12px;box-sizing:border-box;background:#ffffff;border-right:1px solid #d6d6e0;border-bottom:1px solid #d6d6e0;"></div>
<div class="cell" style="left:305.8px;top:211px;">sample_depth</div>
<div class="a" style="left:353px;top:211px;width:36.0px;height:12px;box-sizing:border-box;background:#ffffff;border-right:1px solid #d6d6e0;border-bottom:1px solid #d6d6e0;"></div>
<div class="cell" style="left:353.8px;top:211px;">BitFld</div>
<div class="a" style="left:389px;top:211px;width:28.0px;height:12px;box-sizing:border-box;background:#ffffff;border-right:1px solid #d6d6e0;border-bottom:1px solid #d6d6e0;"></div>
<div class="cell" style="left:389.8px;top:211px;">7</div>
<div class="a" style="left:417px;top:211px;width:23.0px;height:12px;box-sizing:border-box;background:#ffffff;border-right:1px solid #d6d6e0;border-bottom:1px solid #d6d6e0;"></div>
<div class="cell" style="left:417.8px;top:211px;">--</div>
<div class="a" style="left:440px;top:211px;width:26.0px;height:12px;box-sizing:border-box;background:#ffffff;border-right:1px solid #d6d6e0;border-bottom:1px solid #d6d6e0;"></div>
<div class="cell" style="left:440.8px;top:211px;">--</div>
<div class="a" style="left:466px;top:211px;width:21.0px;height:12px;box-sizing:border-box;background:#ffffff;border-right:1px solid #d6d6e0;border-bottom:1px solid #d6d6e0;"></div>
<div class="cell" style="left:466.8px;top:211px;">2</div>
<div class="a" style="left:487px;top:211px;width:24.0px;height:12px;box-sizing:border-box;background:#ffffff;border-right:1px solid #d6d6e0;border-bottom:1px solid #d6d6e0;"></div>
<div class="cell" style="left:487.8px;top:211px;">0</div>
<div class="a" style="left:511px;top:211px;width:21.0px;height:12px;box-sizing:border-box;background:#ffffff;border-right:1px solid #d6d6e0;border-bottom:1px solid #d6d6e0;"></div>
<div class="cell" style="left:511.8px;top:211px;">1</div>
<div class="a" style="left:290px;top:292px;width:356px;height:4px;background:#e5e4e2;border-top:1px solid #929292;box-sizing:border-box;"></div>
<div class="a" style="left:290px;top:296px;width:356px;height:11px;background:linear-gradient(#a4a4a4,#b4b4b4 10%,#bebebe 50%,#cbcbcb);"></div>
<div class="a" style="left:290px;top:307px;width:356px;height:99px;background:#fff;overflow:hidden;"><div class="t" id="desc" style="right:4.6px;top:0px;color:#111;">Short Audio Descriptor: describes audio format, channel number, and sample bitrate/resolution capabilities of the display</div></div>
<div class="a" style="left:106px;top:406px;width:540px;height:12px;background:#f4f3f1;border-top:1px solid #969696;box-sizing:border-box;"></div>
<div class="a" style="left:106px;top:407px;width:540px;height:1px;background:#fbfbfb;"></div>
<div class="t" style="left:460px;top:408.6px;color:#222;font-size:6.78px;">Offset: Abs:136 (0x0088), Rel: 4 (0x04)</div>
<svg class="a" style="left:635px;top:408px" width="10" height="10" viewBox="0 0 10 10"><path d="M1,9.5 L9.5,1 M4,9.5 L9.5,4 M7,9.5 L9.5,7" stroke="#9a9a9a" stroke-width="0.9" fill="none"/></svg>
<div class="a" style="left:103px;top:419px;width:10px;height:3px;background:#2446a8;"></div>
<div class="a" style="left:103px;top:412px;width:2px;height:10px;background:linear-gradient(#d9d9d9,#2446a8 40%);"></div>
<div class="a" style="left:639px;top:419px;width:10px;height:3px;background:#2446a8;"></div>
<div class="a" style="left:647px;top:412px;width:2px;height:10px;background:linear-gradient(#d9d9d9,#2446a8 40%);"></div>
<div class="a" style="left:244px;top:189px;width:125px;height:181px;background:#fff;border:1px solid #cfcfcf;border-radius:4px;box-sizing:border-box;box-shadow:0 1px 2px rgba(0,0,0,0.13);"></div>
<div class="a" style="left:245px;top:192px;width:121.3px;height:21px;background:#3a84e1;"></div>
<div class="t" style="left:262.6px;top:193px;color:#fff;">Src: SAD</div>
<div class="t" style="left:262.6px;top:202px;color:#fff;">Sel: SAD</div>
<svg class="a" style="left:356.5px;top:198px" width="6" height="9" viewBox="0 0 6 9"><path d="M0.5,0.4 L4.7,4.2 L0.5,8 Z" fill="#fff"/></svg>
<div class="a" style="left:245px;top:335px;width:123px;height:1px;background:#dedede;"></div>
<div class="a" style="left:366px;top:188px;width:144px;height:53px;background:#fff;border:1px solid #cfcfcf;border-radius:4px;box-sizing:border-box;box-shadow:0 1px 2px rgba(0,0,0,0.13);"></div>
<div class="t" style="left:386.2px;top:193px;color:#333;">Src: SAD, offs=139 (7), size=3</div>
<div class="t" style="left:386.2px;top:202px;color:#333;">Sel: SAD, offs=136 (4)</div>
<div class="t" style="left:386.2px;top:210px;color:#333;">Free space: (bytes)</div>
<div class="t" style="left:386.2px;top:218px;color:#333;">group: 22</div>
<div class="t" style="left:386.2px;top:227px;color:#333;">block: 9</div>
<div class="mi dis" style="top:216px;">Reparse Group</div>
<svg class="a" style="left:248.7px;top:215px;overflow:visible" width="11" height="12" viewBox="0 0 11 12"><g fill="#efefef" stroke="#a9a9a9" stroke-width="0.55" transform="translate(0,0.8)"><polygon points="6.73,2.25 5.60,2.90 4.47,2.25 4.47,0.95 5.60,0.30 6.73,0.95"/><polygon points="5.48,4.65 4.35,5.30 3.22,4.65 3.22,3.35 4.35,2.70 5.48,3.35"/><polygon points="7.98,4.65 6.85,5.30 5.72,4.65 5.72,3.35 6.85,2.70 7.98,3.35"/><polygon points="4.23,7.05 3.10,7.70 1.97,7.05 1.97,5.75 3.10,5.10 4.23,5.75"/><polygon points="6.73,7.05 5.60,7.70 4.47,7.05 4.47,5.75 5.60,5.10 6.73,5.75"/><polygon points="9.23,7.05 8.10,7.70 6.97,7.05 6.97,5.75 8.10,5.10 9.23,5.75"/><polygon points="2.98,9.45 1.85,10.10 0.72,9.45 0.72,8.15 1.85,7.50 2.98,8.15"/><polygon points="5.48,9.45 4.35,10.10 3.22,9.45 3.22,8.15 4.35,7.50 5.48,8.15"/><polygon points="7.98,9.45 6.85,10.10 5.72,9.45 5.72,8.15 6.85,7.50 7.98,8.15"/><polygon points="10.48,9.45 9.35,10.10 8.22,9.45 8.22,8.15 9.35,7.50 10.48,8.15"/></g></svg>
<div class="mi" style="top:232px;">Copy</div>
<div class="sc" style="left:302px;top:232px;">Ctrl+C</div>
<svg class="a" style="left:248.7px;top:231px;overflow:visible" width="11" height="12" viewBox="0 0 11 12"><rect x="0.9" y="1.1" width="7" height="6.8" rx="0.5" fill="#f6f6f6" stroke="#8c8c8c" stroke-width="0.75"/><rect x="3.3" y="2.8" width="7" height="6.8" rx="0.5" fill="#ffffff" stroke="#787878" stroke-width="0.75"/><path d="M8,9.6 L10.3,7.3 L8,7.3 Z" fill="#7a7a7a"/></svg>
<div class="mi" style="top:247px;">Paste</div>
<div class="sc" style="left:302px;top:247px;">Ctrl+V</div>
<svg class="a" style="left:248.7px;top:246px;overflow:visible" width="11" height="12" viewBox="0 0 11 12"><rect x="1.2" y="1.3" width="8.8" height="9.2" rx="1.3" fill="#b07428" stroke="#8a5514" stroke-width="0.9"/><rect x="3" y="3.2" width="5.2" height="5.8" fill="#f8f8f8" stroke="#c0c0c0" stroke-width="0.4"/><rect x="3.8" y="0.5" width="3.6" height="1.9" rx="0.7" fill="#8c8c8c"/><path d="M5,5.2 L6.4,5.2 L6.4,7 L5,7" stroke="#9a9a9a" stroke-width="0.5" fill="none"/></svg>
<div class="mi" style="top:262px;">Delete</div>
<div class="sc" style="left:302px;top:262px;">Delete</div>
<svg class="a" style="left:248.7px;top:260px;overflow:visible" width="11" height="12" viewBox="0 0 11 12"><rect x="2.1" y="1.9" width="6.6" height="2.8" fill="#e9e9e9" stroke="#a2a2a2" stroke-width="0.5"/><rect x="0.5" y="3" width="10" height="5" rx="0.9" fill="#3766b2" stroke="#284e92" stroke-width="0.6"/><rect x="2.3" y="2.6" width="6.2" height="1.6" fill="#f2f2f2"/><rect x="1.4" y="5.6" width="8.2" height="0.9" fill="#c9d9f2"/><path d="M2.3,8.4 L2.3,11.6 M3.9,8.4 L3.9,11.6 M5.5,8.4 L5.5,11.6 M7.1,8.4 L7.1,11.6 M8.7,8.4 L8.7,11.6" stroke="#8e8e8e" stroke-width="0.9"/></svg>
<div class="mi" style="top:277px;">Cut</div>
<div class="sc" style="left:302px;top:277px;">Ctrl+X</div>
<svg class="a" style="left:248.7px;top:276px;overflow:visible" width="11" height="12" viewBox="0 0 11 12"><path d="M3.3,1.2 L6.1,7 M7.5,1.2 L4.7,7" stroke="#7d7d7d" stroke-width="1.3" fill="none" stroke-linecap="round"/><path d="M3.8,1.8 L5.6,5.6 M7,1.8 L5.2,5.6" stroke="#dcdcdc" stroke-width="0.45" fill="none"/><ellipse cx="3.1" cy="8.8" rx="1.7" ry="1.45" fill="none" stroke="#c80f0f" stroke-width="1.6"/><ellipse cx="7.7" cy="8.8" rx="1.7" ry="1.45" fill="none" stroke="#c80f0f" stroke-width="1.6"/></svg>
<div class="mi" style="top:292px;">Insert above</div>
<svg class="a" style="left:248.7px;top:291px;overflow:visible" width="11" height="12" viewBox="0 0 11 12"><defs><linearGradient id="gu" x1="0" y1="0" x2="1" y2="1"><stop offset="0" stop-color="#9adf6c"/><stop offset="1" stop-color="#3f9f22"/></linearGradient></defs><path d="M5.4,1 L10.3,7.5 L8,7.5 L8,10.9 L2.7,10.9 L2.7,7.5 L0.4,7.5 Z" fill="url(#gu)" stroke="#357f1a" stroke-width="0.8" stroke-linejoin="round"/><path d="M5.4,2.6 L7.9,6.3 L6.6,6.3 L6.6,9.6 L4.2,9.6 L4.2,6.3 L2.9,6.3 Z" fill="#a5e57c" opacity="0.55"/></svg>
<div class="mi dis" style="top:307px;">Insert into</div>
<svg class="a" style="left:248.7px;top:306px;overflow:visible" width="11" height="12" viewBox="0 0 11 12"><path d="M10.4,6.2 L4.2,1.3 L4.2,4.1 L0.3,4.1 L0.3,8.4 L4.2,8.4 L4.2,11 Z" fill="#cfeabf" stroke="#aed79c" stroke-width="0.8" stroke-linejoin="round"/></svg>
<div class="mi" style="top:323px;">Insert below</div>
<svg class="a" style="left:248.7px;top:322px;overflow:visible" width="11" height="12" viewBox="0 0 11 12"><defs><linearGradient id="gd" x1="0" y1="0" x2="1" y2="1"><stop offset="0" stop-color="#9adf6c"/><stop offset="1" stop-color="#3f9f22"/></linearGradient></defs><path d="M5.4,10.4 L10.3,3.7 L8,3.7 L8,0.4 L2.7,0.4 L2.7,3.7 L0.4,3.7 Z" fill="url(#gd)" stroke="#357f1a" stroke-width="0.8" stroke-linejoin="round"/><path d="M5.4,8.6 L7.9,4.9 L6.6,4.9 L6.6,1.6 L4.2,1.6 L4.2,4.9 L2.9,4.9 Z" fill="#a5e57c" opacity="0.5"/></svg>
<div class="mi" style="top:338px;">Move Up</div>
<div class="sc" style="left:302px;top:338px;">Ctrl+Up</div>
<svg class="a" style="left:248.7px;top:337px;overflow:visible" width="11" height="12" viewBox="0 0 11 12"><defs><linearGradient id="gu" x1="0" y1="0" x2="1" y2="1"><stop offset="0" stop-color="#9adf6c"/><stop offset="1" stop-color="#3f9f22"/></linearGradient></defs><path d="M5.4,1 L10.3,7.5 L8,7.5 L8,10.9 L2.7,10.9 L2.7,7.5 L0.4,7.5 Z" fill="url(#gu)" stroke="#357f1a" stroke-width="0.8" stroke-linejoin="round"/><path d="M5.4,2.6 L7.9,6.3 L6.6,6.3 L6.6,9.6 L4.2,9.6 L4.2,6.3 L2.9,6.3 Z" fill="#a5e57c" opacity="0.55"/></svg>
<div class="mi" style="top:353px;">Move Down</div>
<div class="sc" style="left:302px;top:353px;">Ctrl+Down</div>
<svg class="a" style="left:248.7px;top:353px;overflow:visible" width="11" height="12" viewBox="0 0 11 12"><defs><linearGradient id="gd" x1="0" y1="0" x2="1" y2="1"><stop offset="0" stop-color="#9adf6c"/><stop offset="1" stop-color="#3f9f22"/></linearGradient></defs><path d="M5.4,10.4 L10.3,3.7 L8,3.7 L8,0.4 L2.7,0.4 L2.7,3.7 L0.4,3.7 Z" fill="url(#gd)" stroke="#357f1a" stroke-width="0.8" stroke-linejoin="round"/><path d="M5.4,8.6 L7.9,4.9 L6.6,4.9 L6.6,1.6 L4.2,1.6 L4.2,4.9 L2.9,4.9 Z" fill="#a5e57c" opacity="0.5"/></svg>
</div></body></html>
